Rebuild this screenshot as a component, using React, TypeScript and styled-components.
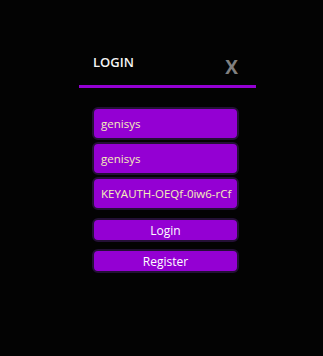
import React from "react";
import styled, { createGlobalStyle } from "styled-components";

const Global = createGlobalStyle`
  html, body { margin: 0; padding: 0; background: #030303; }
  body { width: 323px; height: 356px; overflow: hidden; font-family: "Open Sans", "Noto Sans", sans-serif; }
`;

const Page = styled.div`
  display: flex;
  flex-direction: column;
  padding: 50px 0 0 79px;
  width: 177px;
`;

const Header = styled.div`
  display: flex;
  align-items: center;
  justify-content: space-between;
  height: 35px;
  padding: 0 18px 0 14px;
  border-bottom: 3px solid #9400d3;
`;

const Title = styled.div`
  color: #f4f4f4;
  font-weight: 600;
  font-size: 13px;
  margin-top: -12px;
`;

const Close = styled.div`
  color: #808080;
  font-weight: 700;
  font-size: 19px;
  margin-top: -2px;
`;

const Form = styled.div`
  display: flex;
  flex-direction: column;
  gap: 2px;
  margin: 19px 0 0 13px;
  width: 147px;
`;

const Field = styled.div`
  box-sizing: border-box;
  height: 33px;
  border: 2px solid #241036;
  border-radius: 6px;
  background: #9400d3;
  color: #f4f0b8;
  font-size: 11.5px;
  display: flex;
  align-items: center;
  padding: 0 7px;
  white-space: nowrap;
  overflow: hidden;
`;

const Button = styled.div<{ $top: number }>`
  box-sizing: border-box;
  height: 24px;
  margin-top: ${(p) => p.$top}px;
  border: 2px solid #241036;
  border-radius: 6px;
  background: #9400d3;
  color: #ffffff;
  font-size: 12px;
  display: flex;
  align-items: center;
  justify-content: center;
`;

export default function App() {
  return (
    <>
      <Global />
      <Page>
        <Header>
          <Title>LOGIN</Title>
          <Close>X</Close>
        </Header>
        <Form>
          <Field>genisys</Field>
          <Field>genisys</Field>
          <Field>KEYAUTH-OEQf-0iw6-rCf</Field>
          <Button $top={6}>Login</Button>
          <Button $top={5}>Register</Button>
        </Form>
      </Page>
    </>
  );
}
